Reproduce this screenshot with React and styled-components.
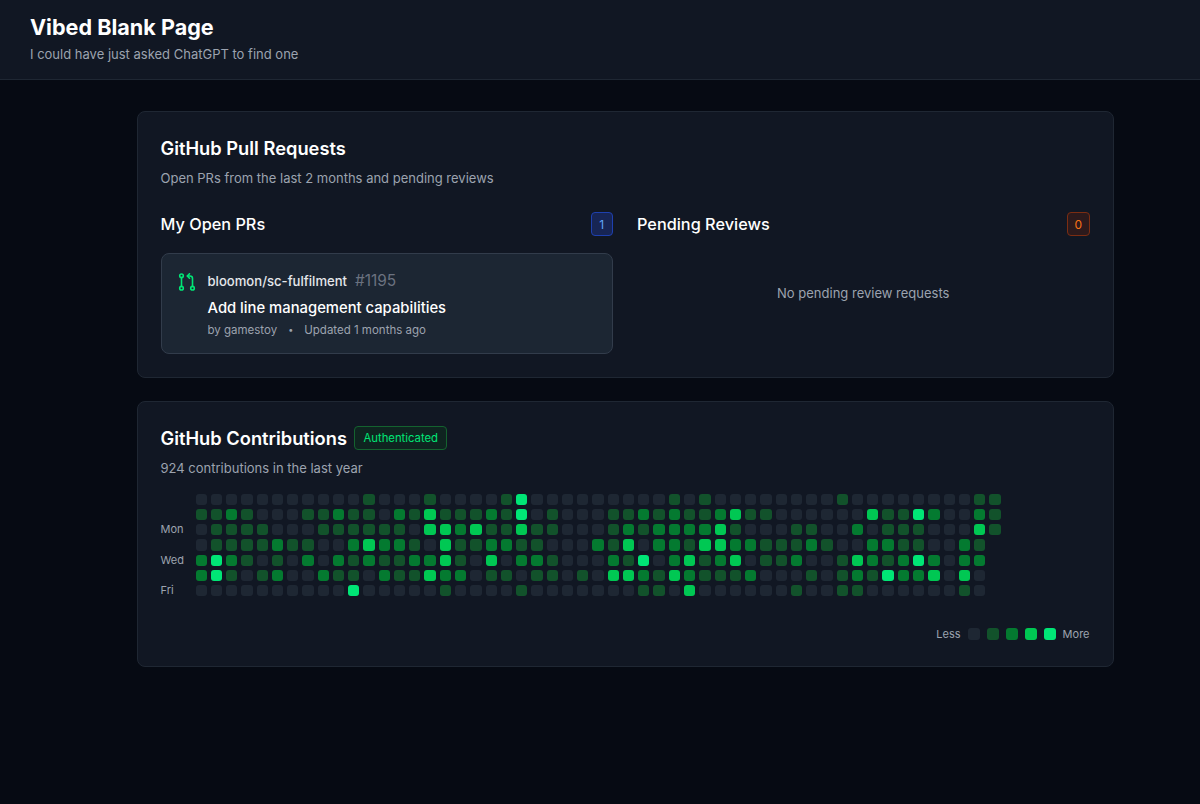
import React from 'react';
import styled, { createGlobalStyle } from 'styled-components';

const GlobalStyle = createGlobalStyle`
  html, body {
    margin: 0;
    padding: 0;
    background: #060a13;
  }
  body {
    font-family: 'Inter', 'Liberation Sans', sans-serif;
    -webkit-font-smoothing: antialiased;
  }
`;

const Page = styled.div`
  min-height: 804px;
  background: #060a13;
  color: #fff;
`;

const Header = styled.header`
  height: 64px;
  padding: 15px 30px 0;
  background: #111723;
  border-bottom: 1px solid #1f2733;
`;

const PageTitle = styled.h1`
  margin: 0;
  font-size: 21.6px;
  line-height: 24px;
  font-weight: 700;
`;

const PageSubtitle = styled.p`
  margin: 5px 0 0;
  font-size: 13px;
  line-height: 20px;
  color: #9ca3af;
`;

const Main = styled.main`
  width: 977px;
  margin-left: 136.5px;
  padding-top: 31px;
  display: flex;
  flex-direction: column;
  gap: 23px;
`;

const Card = styled.section`
  box-sizing: border-box;
  padding: 24px 23px 23px;
  background: #111723;
  border: 1px solid #1f2733;
  border-radius: 8px;
`;

const TitleRow = styled.div`
  display: flex;
  align-items: center;
  gap: 7.5px;
`;

const CardTitle = styled.h2`
  margin: 0;
  font-size: 18.3px;
  line-height: 24px;
  font-weight: 600;
`;

const CardSubtitle = styled.p`
  margin: 8px 0 0;
  font-size: 13px;
  line-height: 20px;
  color: #9ca3af;
`;

const Columns = styled.div`
  display: grid;
  grid-template-columns: 1fr 1fr;
  gap: 24px;
  margin-top: 24px;
`;

const ColumnHead = styled.div`
  display: flex;
  align-items: center;
  justify-content: space-between;
  height: 24px;
  margin-bottom: 17px;
`;

const ColumnTitle = styled.h3`
  margin: 0;
  font-size: 16.3px;
  line-height: 24px;
  font-weight: 500;
`;

const COUNT_TONES = {
  blue: { bg: '#172554', border: '#1e40af', color: '#60a5fa' },
  orange: { bg: '#2c1a1c', border: '#7c2d12', color: '#f97316' },
};

const CountBadge = styled.span`
  box-sizing: border-box;
  width: 22.5px;
  height: 24px;
  display: flex;
  align-items: center;
  justify-content: center;
  font-size: 12px;
  border-radius: 4px;
  background: ${(p) => COUNT_TONES[p.$tone].bg};
  border: 1px solid ${(p) => COUNT_TONES[p.$tone].border};
  color: ${(p) => COUNT_TONES[p.$tone].color};
`;

const PrCard = styled.article`
  box-sizing: border-box;
  height: 101px;
  display: flex;
  gap: 12px;
  padding: 17px 16px 0;
  background: #1c2633;
  border: 1px solid #323c4b;
  border-radius: 8px;
`;

const IconWrap = styled.div`
  width: 18px;
  height: 18px;
  flex: none;
  margin-top: 2px;
  color: #00e676;
`;

const PrBody = styled.div`
  min-width: 0;
`;

const RepoRow = styled.div`
  display: flex;
  align-items: baseline;
  gap: 8px;
  height: 21px;
`;

const RepoName = styled.span`
  font-size: 13.1px;
  font-weight: 500;
  color: #e5e7eb;
`;

const PrNumber = styled.span`
  font-size: 15.4px;
  color: #6b7280;
`;

const PrTitle = styled.div`
  margin-top: 6px;
  font-size: 14.8px;
  line-height: 20px;
  font-weight: 500;
  color: #fff;
`;

const PrMeta = styled.div`
  display: flex;
  align-items: center;
  gap: 11px;
  margin-top: 4px;
  font-size: 11.5px;
  line-height: 16px;
  color: #9ca3af;
`;

const MetaDot = styled.span`
  font-size: 9px;
`;

const Empty = styled.div`
  padding-top: 30px;
  text-align: center;
  font-size: 13px;
  line-height: 20px;
  color: #9ca3af;
`;

const AuthBadge = styled.span`
  display: inline-flex;
  align-items: center;
  height: 24px;
  box-sizing: border-box;
  padding: 0 8px;
  font-size: 11.3px;
  color: #00e676;
  background: #0f2420;
  border: 1px solid #14632f;
  border-radius: 4px;
`;

const GraphArea = styled.div`
  display: flex;
  margin-top: 15.5px;
`;

const DayLabels = styled.div`
  width: 35px;
  display: grid;
  grid-template-rows: repeat(7, 11.27px);
  row-gap: 4px;
  font-size: 11px;
  color: #9ca3af;
`;

const DayLabel = styled.span`
  display: flex;
  align-items: center;
  line-height: 11px;
`;

const Weeks = styled.div`
  display: grid;
  grid-auto-flow: column;
  grid-template-rows: repeat(7, 11.27px);
  grid-auto-columns: 11.27px;
  gap: 4px;
`;

const CELL_COLORS = ['#1e2733', '#12522b', '#047a30', '#00c853', '#00e676'];

const Cell = styled.div`
  width: ${(p) => p.$size || '11.27px'};
  height: ${(p) => p.$size || '11.27px'};
  border-radius: 3px;
  background: ${(p) => CELL_COLORS[p.$level]};
`;

const Legend = styled.div`
  display: flex;
  align-items: center;
  justify-content: flex-end;
  gap: 7px;
  margin-top: 30px;
  margin-bottom: 1px;
  font-size: 11px;
  line-height: 16px;
  color: #9ca3af;
`;

// contribution level per weekday row, one value per week
const ROW_DATA = [
  [0,0,0,0,0,0,0,0,0,0,0,1,0,0,0,1,0, 0,0,0,1,4,0,0,0,0,0,0,0,0,0,1,0,1,0, 0,0,0,0,0,0,0,1,0,0,0,0,0,0,0,0,1,1],
  [1,1,2,1,0,0,0,1,1,2,1,1,0,2,1,3,1, 1,1,2,1,4,0,1,0,0,0,1,1,2,1,2,1,1,2, 3,1,1,0,0,0,0,0,0,3,1,1,4,2,0,0,2,1],
  [0,1,1,1,1,0,0,0,1,1,1,1,1,1,0,3,3, 2,3,1,1,3,1,1,0,0,0,1,2,1,2,2,2,2,3, 1,0,0,0,1,1,0,0,2,0,1,1,1,0,0,0,3,1],
  [0,1,1,1,1,2,1,1,0,0,2,3,2,2,1,0,3, 1,1,2,2,1,1,0,0,0,2,1,3,0,2,2,1,3,3, 2,2,1,1,1,2,1,0,0,2,2,1,1,0,0,2,1],
  [2,4,2,1,0,1,0,2,0,2,1,2,1,1,2,2,3, 1,0,3,0,2,2,1,0,0,0,2,1,4,0,2,3,1,2, 3,0,1,1,2,0,0,1,3,2,1,2,4,2,0,2,2],
  [2,4,1,0,1,2,0,0,2,1,1,0,2,1,1,3,2, 2,0,1,1,0,1,1,0,1,0,3,3,2,1,3,2,1,1, 1,2,0,0,0,1,0,1,2,1,4,2,2,3,0,3,0],
  [0,0,0,0,0,0,0,0,0,0,4,0,0,0,0,0,1, 0,0,0,0,1,0,0,0,0,0,0,0,1,1,0,3,0,0, 0,0,0,0,1,0,0,1,1,0,0,0,0,0,0,1,0],
];

const WEEK_COUNT = ROW_DATA[0].length;

const DAY_NAMES = ['', '', 'Mon', '', 'Wed', '', 'Fri'];

function PullRequestIcon() {
  return (
    <svg width="18" height="18" viewBox="0 0 18 18" fill="none" stroke="currentColor" strokeWidth="1.6" strokeLinecap="round" strokeLinejoin="round">
      <circle cx="3.5" cy="2.8" r="1.8" />
      <circle cx="3.5" cy="15.2" r="1.8" />
      <circle cx="14.5" cy="15.2" r="1.8" />
      <path d="M3.5 4.6v8.8" />
      <path d="M14.5 13.4V5.5a2.5 2.5 0 0 0-2.5-2.5H9.5" />
      <path d="M11.5 .8 9.3 3l2.2 2.2" />
    </svg>
  );
}

export default function App() {
  return (
    <Page>
      <GlobalStyle />
      <Header>
        <PageTitle>Vibed Blank Page</PageTitle>
        <PageSubtitle>I could have just asked ChatGPT to find one</PageSubtitle>
      </Header>
      <Main>
        <Card>
          <CardTitle>GitHub Pull Requests</CardTitle>
          <CardSubtitle>Open PRs from the last 2 months and pending reviews</CardSubtitle>
          <Columns>
            <div>
              <ColumnHead>
                <ColumnTitle>My Open PRs</ColumnTitle>
                <CountBadge $tone="blue">1</CountBadge>
              </ColumnHead>
              <PrCard>
                <IconWrap><PullRequestIcon /></IconWrap>
                <PrBody>
                  <RepoRow>
                    <RepoName>bloomon/sc-fulfilment</RepoName>
                    <PrNumber>#1195</PrNumber>
                  </RepoRow>
                  <PrTitle>Add line management capabilities</PrTitle>
                  <PrMeta>
                    <span>by gamestoy</span>
                    <MetaDot>•</MetaDot>
                    <span>Updated 1 months ago</span>
                  </PrMeta>
                </PrBody>
              </PrCard>
            </div>
            <div>
              <ColumnHead>
                <ColumnTitle>Pending Reviews</ColumnTitle>
                <CountBadge $tone="orange">0</CountBadge>
              </ColumnHead>
              <Empty>No pending review requests</Empty>
            </div>
          </Columns>
        </Card>
        <Card>
          <TitleRow>
            <CardTitle>GitHub Contributions</CardTitle>
            <AuthBadge>Authenticated</AuthBadge>
          </TitleRow>
          <CardSubtitle>924 contributions in the last year</CardSubtitle>
          <GraphArea>
            <DayLabels>
              {DAY_NAMES.map((d, i) => <DayLabel key={i}>{d}</DayLabel>)}
            </DayLabels>
            <Weeks>
              {Array.from({ length: WEEK_COUNT }).flatMap((_, w) =>
                ROW_DATA.map((row, r) =>
                  row[w] === undefined ? <span key={`${w}-${r}`} /> : <Cell key={`${w}-${r}`} $level={row[w]} />
                )
              )}
            </Weeks>
          </GraphArea>
          <Legend>
            <span>Less</span>
            {[0, 1, 2, 3, 4].map((l) => <Cell key={l} $level={l} $size="12px" />)}
            <span>More</span>
          </Legend>
        </Card>
      </Main>
    </Page>
  );
}
